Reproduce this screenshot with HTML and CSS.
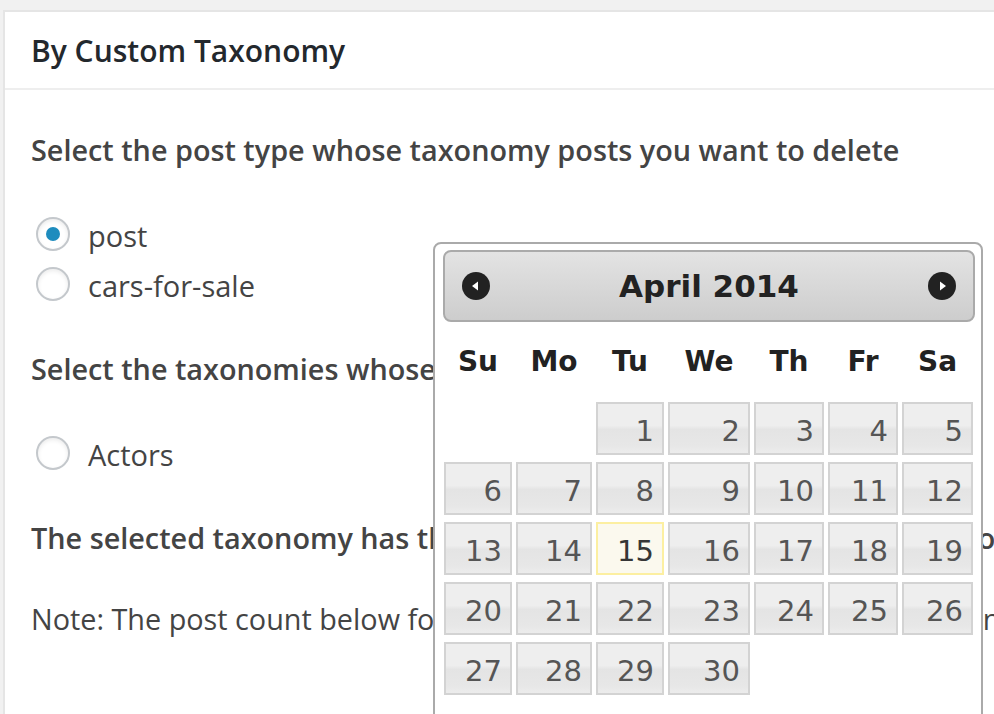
FILE: index.html
```html
<!DOCTYPE html>
<html lang="en">
<head>
    <meta charset="UTF-8">
    <title>Bulk Delete - By Custom Taxonomy</title>
    <link rel="stylesheet" href="styles.css">
</head>
<body>

    <div class="postbox">
        <h3 class="hndle">By Custom Taxonomy</h3>
        <div class="inside">
            <p class="lead">Select the post type whose taxonomy posts you want to delete</p>

            <div class="radios">
                <label class="radio"><span class="dot checked"></span>post</label>
                <label class="radio"><span class="dot"></span>cars-for-sale</label>
            </div>

            <p class="lead">Select the taxonomies whose term posts you want to delete</p>

            <div class="radios">
                <label class="radio"><span class="dot"></span>Actors</label>
            </div>

            <p class="lead">The selected taxonomy has the following terms. Select the terms whose posts you want to delete</p>

            <p class="note">Note: The post count below for each term is the total number of posts in that term, irrespective of post type.</p>
        </div>
    </div>

    <!-- jQuery UI datepicker popup -->
    <div class="datepicker">
        <div class="dp-header">
            <a class="dp-nav">
                <svg width="28" height="28" viewBox="0 0 28 28"><circle cx="14" cy="14" r="14" fill="#222"/><polygon points="10,14 16,9.5 16,18.5" fill="#fff"/></svg>
            </a>
            <div class="dp-title">April 2014</div>
            <a class="dp-nav">
                <svg width="28" height="28" viewBox="0 0 28 28"><circle cx="14" cy="14" r="14" fill="#222"/><polygon points="18,14 12,9.5 12,18.5" fill="#fff"/></svg>
            </a>
        </div>

        <div class="dp-grid">
            <div class="dow">Su</div>
            <div class="dow">Mo</div>
            <div class="dow">Tu</div>
            <div class="dow">We</div>
            <div class="dow">Th</div>
            <div class="dow">Fr</div>
            <div class="dow">Sa</div>

            <div></div>
            <div></div>
            <a class="day">1</a>
            <a class="day">2</a>
            <a class="day">3</a>
            <a class="day">4</a>
            <a class="day">5</a>

            <a class="day">6</a>
            <a class="day">7</a>
            <a class="day">8</a>
            <a class="day">9</a>
            <a class="day">10</a>
            <a class="day">11</a>
            <a class="day">12</a>

            <a class="day">13</a>
            <a class="day">14</a>
            <a class="day today">15</a>
            <a class="day">16</a>
            <a class="day">17</a>
            <a class="day">18</a>
            <a class="day">19</a>

            <a class="day">20</a>
            <a class="day">21</a>
            <a class="day">22</a>
            <a class="day">23</a>
            <a class="day">24</a>
            <a class="day">25</a>
            <a class="day">26</a>

            <a class="day">27</a>
            <a class="day">28</a>
            <a class="day">29</a>
            <a class="day">30</a>
        </div>
    </div>

</body>
</html>
```

FILE: styles.css
```css
body {
    margin: 0;
    background-color: #f1f1f1;
    font-family: 'Open Sans', sans-serif;
    overflow: hidden;
    height: 714px;
}

.postbox {
    width: 1100px;
    margin: 10px 0 0 3px;
    background-color: #fff;
    border: 2px solid #e5e5e5;
    border-right: none;
    min-height: 760px;
}

.hndle {
    margin: 0;
    height: 78px;
    display: flex;
    align-items: center;
    padding-left: 26px;
    box-sizing: border-box;
    font-size: 30px;
    font-weight: 600;
    color: #23282d;
    border-bottom: 2px solid #eee;
}

.inside {
    padding: 40px 0 0 26px;
    color: #444;
}

.lead,
.note {
    margin: 0;
    font-size: 28.8px;
    line-height: 40px;
    white-space: nowrap;
}

.lead {
    font-weight: 600;
}

.radios {
    margin: 40px 0 39px;
}

.radio {
    display: flex;
    align-items: center;
    height: 50px;
    font-size: 29px;
}

.dot {
    box-sizing: border-box;
    width: 34px;
    height: 34px;
    margin: -3px 18px 0 5px;
    border: 2px solid #c4c8cc;
    border-radius: 50%;
    box-shadow: inset 0 2px 4px rgba(0, 0, 0, 0.08);
    display: flex;
    align-items: center;
    justify-content: center;
}

.dot.checked::before {
    content: "";
    width: 14px;
    height: 14px;
    border-radius: 50%;
    background-color: #1e8cbe;
}

.note {
    margin-top: 41px;
}

/* datepicker */
.datepicker {
    position: absolute;
    left: 433px;
    top: 242px;
    width: 550px;
    height: 500px;
    box-sizing: border-box;
    padding: 6px 6px 6px 8px;
    background-color: #fff;
    border: 2px solid #aaa;
    border-radius: 8px;
    font-family: 'DejaVu Sans', Verdana, sans-serif;
    color: #222;
}

.dp-header {
    display: flex;
    align-items: center;
    height: 68px;
    border: 2px solid #aaa;
    border-radius: 8px;
    background: linear-gradient(#e3e3e3, #cdcdcd);
}

.dp-nav {
    display: flex;
    width: 28px;
    height: 28px;
    margin: 0 17px;
}

.dp-title {
    flex: 1;
    text-align: center;
    font-size: 31px;
    font-weight: bold;
}

.dp-grid {
    display: grid;
    grid-template-columns: 68px 76px 68px 82px 70px 70px 71px;
    grid-template-rows: 73px repeat(5, 53px);
    column-gap: 4px;
    row-gap: 7px;
    margin-left: 1px;
}

.dow {
    align-self: center;
    text-align: center;
    padding-top: 6px;
    font-size: 28px;
    font-weight: bold;
}

.day {
    display: flex;
    align-items: center;
    justify-content: flex-end;
    box-sizing: border-box;
    height: 53px;
    padding: 5px 8px 0 0;
    border: 2px solid #d3d3d3;
    background: linear-gradient(#eeeeee 0, #eeeeee 44%, #e4e4e4 52%, #e7e7e7 85%, #ececec 100%);
    color: #555;
    font-size: 29px;
}

.day.today {
    border-color: #fcefa1;
    background: #fbf9ee;
    color: #363636;
}
```
